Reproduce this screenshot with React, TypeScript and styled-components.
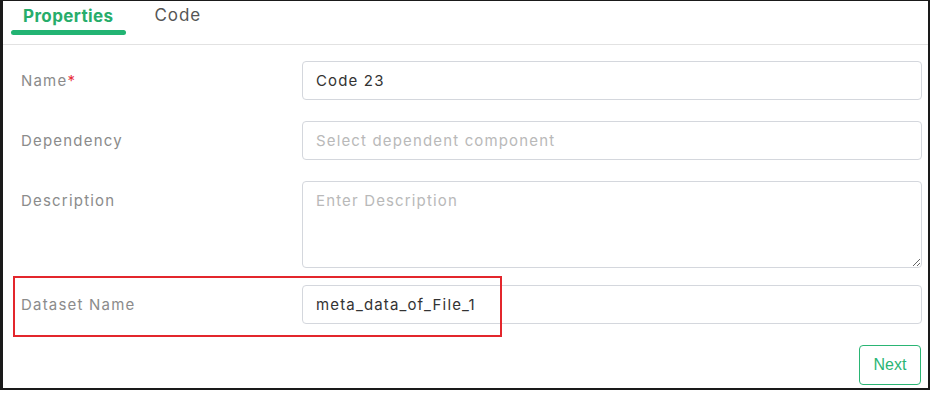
import React from 'react';
import styled, { createGlobalStyle } from 'styled-components';

const GlobalStyle = createGlobalStyle`
  body {
    margin: 0;
    background: #fff;
    font-family: Inter, 'Noto Sans', sans-serif;
  }
`;

const FIELDS = [
  { label: 'Name', required: true, value: 'Code 23', placeholder: '', top: 16 },
  { label: 'Dependency', required: false, value: '', placeholder: 'Select dependent component', top: 21 },
  { label: 'Description', required: false, value: '', placeholder: 'Enter Description', top: 21, multiline: true },
  { label: 'Dataset Name', required: false, value: 'meta_data_of_File_1', placeholder: '', top: 17 },
];

export default function App() {
  return (
    <>
      <GlobalStyle />
      <Frame>
        <TabBar>
          <Tab $active>Properties</Tab>
          <Tab>Code</Tab>
        </TabBar>
        <Form>
          {FIELDS.map((f) => (
            <Row key={f.label} $top={f.top}>
              <Label>
                {f.label}
                {f.required && <Star>*</Star>}
              </Label>
              {f.multiline ? (
                <TextArea placeholder={f.placeholder} defaultValue={f.value} />
              ) : (
                <Input placeholder={f.placeholder} defaultValue={f.value} />
              )}
            </Row>
          ))}
          <Footer>
            <NextButton>Next</NextButton>
          </Footer>
        </Form>
        <Highlight />
      </Frame>
    </>
  );
}

const Frame = styled.div`
  position: relative;
  box-sizing: border-box;
  width: 930px;
  height: 390px;
  border: 2px solid #1a1a1a;
  border-top-width: 1px;
  border-left-width: 3px;
  background: #fff;
`;

const TabBar = styled.div`
  display: flex;
  align-items: flex-start;
  height: 43px;
  padding-left: 8px;
  border-bottom: 1px solid #e2e2e2;
`;

const Tab = styled.div<{ $active?: boolean }>`
  position: relative;
  padding: 5px 12px 0;
  min-width: ${(p) => (p.$active ? '91px' : 'auto')};
  margin-right: ${(p) => (p.$active ? '17px' : '0')};
  margin-top: ${(p) => (p.$active ? '0' : '-1px')};
  font-size: 17px;
  letter-spacing: ${(p) => (p.$active ? '0.4px' : '0.9px')};
  font-weight: ${(p) => (p.$active ? 700 : 400)};
  color: ${(p) => (p.$active ? '#27ad6b' : '#555')};
  text-align: center;
  height: 34px;
  box-sizing: border-box;

  &:after {
    content: '';
    display: ${(p) => (p.$active ? 'block' : 'none')};
    position: absolute;
    left: 0;
    right: 0;
    bottom: 0;
    height: 5px;
    border-radius: 3px;
    background: #22b473;
  }
`;

const Form = styled.div`
  display: flex;
  flex-direction: column;
  padding: 0 6px 0 18px;
`;

const Row = styled.div<{ $top: number }>`
  display: flex;
  align-items: flex-start;
  margin-top: ${(p) => p.$top}px;
`;

const Label = styled.div`
  width: 281px;
  flex-shrink: 0;
  line-height: 39px;
  font-size: 15px;
  letter-spacing: 1.2px;
  color: #8b8b8b;
`;

const Star = styled.span`
  color: #e8303c;
`;

const fieldBase = `
  box-sizing: border-box;
  flex: 1;
  border: 1px solid #d4d7dd;
  border-radius: 4px;
  padding: 0 13px;
  font-family: Inter, 'Noto Sans', sans-serif;
  font-size: 15px;
  letter-spacing: 1.15px;
  color: #333;
  background: #fff;
  outline: none;

  &::placeholder {
    color: #b9b9b9;
  }
`;

const Input = styled.input`
  ${fieldBase}
  height: 39px;
`;

const TextArea = styled.textarea`
  ${fieldBase}
  height: 87px;
  padding-top: 9px;
  resize: vertical;
  line-height: 20px;
`;

const Footer = styled.div`
  display: flex;
  justify-content: flex-end;
  margin-top: 21px;
  padding-right: 1px;
`;

const NextButton = styled.button`
  box-sizing: border-box;
  width: 62px;
  height: 40px;
  border: 1px solid #2ab574;
  border-radius: 4px;
  background: #fff;
  color: #2ab574;
  font-family: 'Liberation Sans', Arial, sans-serif;
  font-size: 16px;
  cursor: pointer;
`;

const Highlight = styled.div`
  position: absolute;
  left: 10px;
  top: 275px;
  width: 489px;
  height: 61px;
  box-sizing: border-box;
  border: 2px solid #e3262c;
  pointer-events: none;
`;
